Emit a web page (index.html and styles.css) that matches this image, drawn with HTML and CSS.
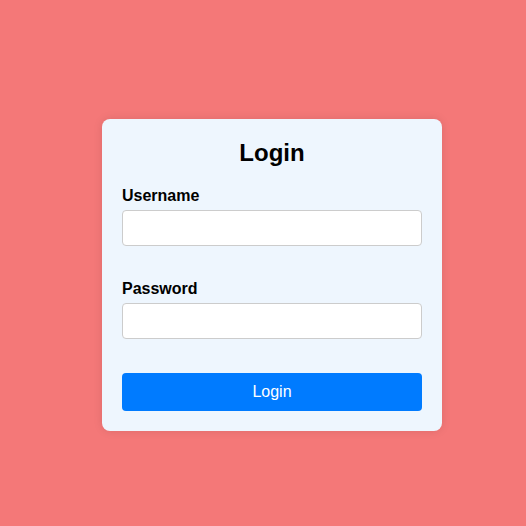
FILE: index.html
```html
<!DOCTYPE html>
<html>
<head>
<meta charset="utf-8">
<link rel="stylesheet" href="styles.css">
</head>
<body>
<main class="page">
  <form class="card">
    <h2 class="title">Login</h2>
    <div class="group">
      <label class="label" for="u">Username</label>
      <input class="input" id="u" type="text">
    </div>
    <div class="group">
      <label class="label" for="p">Password</label>
      <input class="input" id="p" type="password">
    </div>
    <button class="btn" type="button">Login</button>
  </form>
</main>
</body>
</html>
```
FILE: styles.css
```css
html, body {
  margin: 0;
  padding: 0;
  background: #f47878;
  font-family: "Liberation Sans", Arial, sans-serif;
}
.page {
  box-sizing: border-box;
  width: 526px;
  height: 526px;
  padding: 119px 0 0 102px;
}
.card {
  box-sizing: border-box;
  width: 340px;
  padding: 20px 20px 20px;
  background: #eef6fe;
  border-radius: 8px;
  box-shadow: 0 0 10px rgba(0,0,0,0.1);
  display: flex;
  flex-direction: column;
}
.title {
  margin: 0 0 20px;
  font-size: 24px;
  line-height: 28px;
  font-weight: bold;
  text-align: center;
  color: #000;
}
.group {
  display: flex;
  flex-direction: column;
  margin-bottom: 34px;
}
.label {
  font-size: 16px;
  font-weight: bold;
  line-height: 18px;
  margin-bottom: 5px;
  color: #000;
}
.input {
  box-sizing: border-box;
  width: 300px;
  height: 36px;
  border: 1px solid #ccc;
  border-radius: 4px;
  background: #fff;
  padding: 8px;
  font-size: 16px;
  margin: 0;
}
.btn {
  box-sizing: border-box;
  width: 300px;
  height: 38px;
  border: none;
  border-radius: 4px;
  background: #007bff;
  color: #fff;
  font-family: "Liberation Sans", Arial, sans-serif;
  font-size: 16px;
  margin: 0;
}
```
